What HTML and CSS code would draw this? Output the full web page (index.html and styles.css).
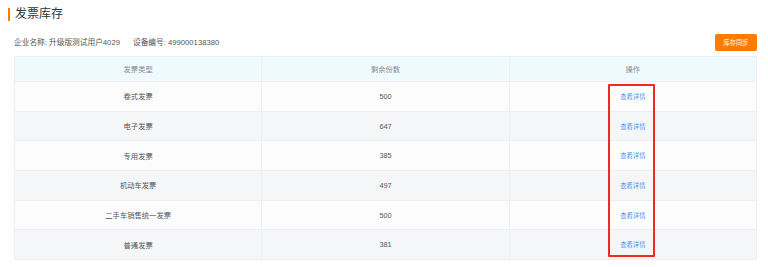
FILE: index.html
```html
<!DOCTYPE html>
<html lang="zh">
<head>
<meta charset="utf-8">
<link rel="stylesheet" href="styles.css">
</head>
<body>
<div class="page">
  <h1 class="title">发票库存</h1>
  <div class="info-bar">
    <div class="info">
      <span class="info-item">企业名称: 升级版测试用户4029</span>
      <span class="info-item">设备编号: 499000138380</span>
    </div>
    <button class="sync-btn">库存同步</button>
  </div>
  <div class="table-wrap">
    <table class="stock">
      <thead>
        <tr><th>发票类型</th><th>剩余份数</th><th>操作</th></tr>
      </thead>
      <tbody>
        <tr><td>卷式发票</td><td>500</td><td><a class="link">查看详情</a></td></tr>
        <tr><td>电子发票</td><td>647</td><td><a class="link">查看详情</a></td></tr>
        <tr><td>专用发票</td><td>385</td><td><a class="link">查看详情</a></td></tr>
        <tr><td>机动车发票</td><td>497</td><td><a class="link">查看详情</a></td></tr>
        <tr><td>二手车销售统一发票</td><td>500</td><td><a class="link">查看详情</a></td></tr>
        <tr><td>普通发票</td><td>381</td><td><a class="link">查看详情</a></td></tr>
      </tbody>
    </table>
    <div class="highlight"></div>
  </div>
</div>
</body>
</html>
```

FILE: styles.css
```css
* { box-sizing: border-box; }
html, body { margin: 0; padding: 0; background: #fff; }
body {
  font-family: "Liberation Sans", "Noto Sans CJK SC", sans-serif;
  color: #555;
  width: 768px;
  height: 267px;
  overflow: hidden;
}
.page { padding: 0 11px 0 14px; }
.title {
  margin: 8px 0 0 -6px;
  padding-left: 5px;
  border-left: 2px solid #ff7b00;
  font-size: 12px;
  font-weight: normal;
  line-height: 13px;
  height: 13px;
  color: #333;
}
.info-bar {
  display: flex;
  align-items: center;
  justify-content: space-between;
  margin-top: 13px;
  height: 17px;
}
.info { font-size: 7.7px; color: #555; display: flex; gap: 13px; padding-bottom: 3px; }
.sync-btn {
  font-family: inherit;
  border: none;
  background: #ff7b00;
  color: #fff;
  font-size: 6.3px;
  width: 42px;
  height: 17px;
  border-radius: 2px;
  padding: 0;
}
.table-wrap { position: relative; margin-top: 5px; }
.stock {
  width: 743px;
  border-collapse: collapse;
  table-layout: fixed;
  font-size: 7.3px;
}
.stock th, .stock td {
  border: 1px solid #eceff4;
  text-align: center;
  padding: 0;
}
.stock th {
  height: 25px;
  background: #eefaff;
  font-weight: normal;
  color: #888;
}
.stock td { height: 29.7px; color: #555; }
.stock tbody tr:nth-child(odd) td { background: #fcfcfd; }
.stock tbody tr:nth-child(even) td { background: #f5f6f8; }
.link { color: #4c94f0; font-size: 6.3px; }
.highlight {
  position: absolute;
  left: 594px;
  top: 28px;
  width: 47px;
  height: 173px;
  border: 2px solid #ee2a22;
  border-radius: 1px;
}
```
